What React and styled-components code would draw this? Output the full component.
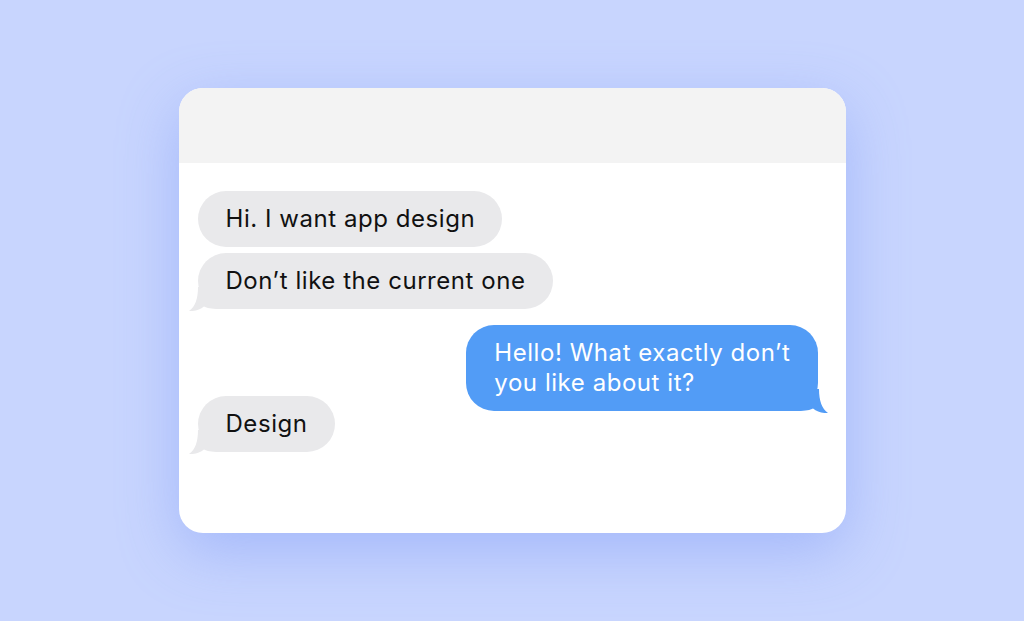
import React from "react";
import styled, { createGlobalStyle } from "styled-components";

const Global = createGlobalStyle`
  html, body {
    margin: 0;
    padding: 0;
    background: #c8d5fe;
  }
  body {
    font-family: Inter, "Noto Sans", sans-serif;
  }
`

const Page = styled.div`
  min-height: 100vh;
  display: flex;
  align-items: center;
  justify-content: center;
`

const Card = styled.div`
  width: 667px;
  height: 445px;
  background: #ffffff;
  border-radius: 24px;
  overflow: hidden;
  box-shadow: 0 18px 60px rgba(120, 148, 246, 0.45);
  display: flex;
  flex-direction: column;
`

const Head = styled.div`
  height: 75px;
  flex-shrink: 0;
  background: #f3f3f3;
`

const Thread = styled.div`
  display: flex;
  flex-direction: column;
  padding: 28px 28px 0 19px;
`

const Bubble = styled.div`
  position: relative;
  align-self: ${p => (p.$mine ? "flex-end" : "flex-start")};
  background: ${p => (p.$mine ? "#529cf6" : "#e9e9eb")};
  color: ${p => (p.$mine ? "#ffffff" : "#111111")};
  font-size: 24px;
  letter-spacing: 0.55px;
  line-height: 30px;
  padding: 13px 27px 13px 28px;
  border-radius: 28px;
  white-space: pre-line;
  margin-top: ${p => p.$gap || 0}px;
`

const Text = styled.span`
  position: relative;
`

const Tail = styled.svg`
  position: absolute;
  bottom: -2px;
  ${p => (p.$mine ? "right: -10px; transform: scaleX(-1);" : "left: -9px;")}
  width: 46px;
  height: 24px;
`

const BubbleTail = ({ mine }) => (
    <Tail $mine={mine} viewBox="0 0 46 24">
        <path
            d="M9 0 C9 12 6 20 0 24 C6 24.5 11 22.5 15 19.5 C18 21 22 22 30 22 L46 22 L46 0 Z"
            fill={mine ? "#529cf6" : "#e9e9eb"}
        />
    </Tail>
)

const Message = ({ mine, tail, gap, children }) => (
    <Bubble $mine={mine} $gap={gap}>
        {tail && <BubbleTail mine={mine}/>}
        <Text>{children}</Text>
    </Bubble>
)

export default function App() {
    return (
        <Page>
            <Global/>
            <Card>
                <Head/>
                <Thread>
                    <Message>Hi. I want app design</Message>
                    <Message tail gap={6}>Don’t like the current one</Message>
                    <Message mine tail gap={16}>{"Hello! What exactly don’t\nyou like about it?"}</Message>
                    <Message tail gap={-15}>Design</Message>
                </Thread>
            </Card>
        </Page>
    )
}
